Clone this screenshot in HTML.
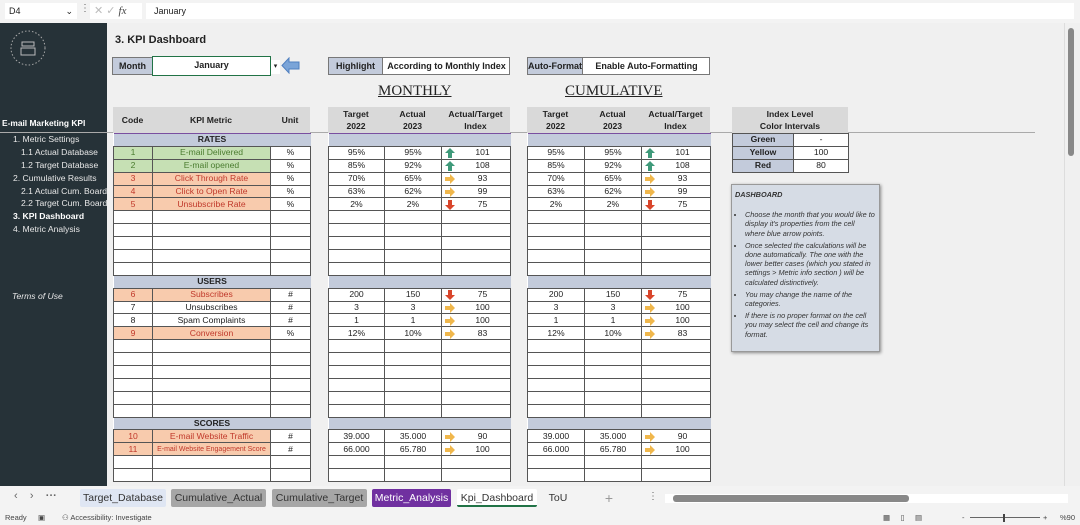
<!DOCTYPE html>
<html><head><meta charset="utf-8"><style>
*{box-sizing:border-box;margin:0;padding:0}
body{width:1080px;height:525px;overflow:hidden;background:#f0f0f0;font-family:"Liberation Sans",sans-serif;font-size:9px;color:#222;position:relative}
.abs{position:absolute}
table{border-collapse:collapse;table-layout:fixed;position:absolute;background:#fff;z-index:2}
td{border:1px solid #555;height:12.9px;text-align:center;font-size:8.6px;padding:0;white-space:nowrap;overflow:hidden;line-height:11px}
tr.sec td{background:#c3cbdb;font-weight:bold;border-left:none;border-right:none;border-top:1.5px solid #7a4fa0}
tr.g td.c{background:#c6e0b4;color:#4a7c2f}
tr.o td.c{background:#f8cbad;color:#c0392b}
.hd{position:absolute;background:#d9d9d9;font-weight:bold;font-size:8.6px;text-align:center;line-height:12px;z-index:2}
.ar{display:inline-block;width:10px;height:10px;vertical-align:middle;float:left;margin:1px 0 0 3px}
.nav div{color:#e8e8e8;font-size:8.6px;height:12.9px;line-height:12.9px;white-space:nowrap}
.tab{position:absolute;top:489px;height:18px;line-height:18px;font-size:10.5px;color:#333;text-align:center;border-radius:2px}
</style></head><body>
<!-- formula bar -->
<div class="abs" style="left:0;top:0;width:1080px;height:23px;background:#f3f3f3"></div>
<div class="abs" style="left:5px;top:3px;width:72px;height:16px;background:#fff;font-size:9px;line-height:16px;padding-left:4px">D4<span style="position:absolute;right:4px">⌄</span></div>
<div class="abs" style="left:80px;top:3px;font-size:10px;color:#666">⋮</div>
<div class="abs" style="left:90px;top:3px;width:52px;height:16px;background:#fff;font-size:11px;color:#bbb;line-height:16px;padding-left:4px">✕ ✓ <i style="color:#444;font-family:'Liberation Serif',serif">fx</i></div>
<div class="abs" style="left:146px;top:3px;width:928px;height:16px;background:#fff;font-size:9px;line-height:16px;padding-left:8px">January</div>
<!-- sidebar -->
<div class="abs" style="left:0;top:23px;width:107px;height:463px;background:#263238"></div>
<svg class="abs" style="left:8px;top:28px" width="40" height="40"><circle cx="20" cy="20" r="17" fill="none" stroke="#aaa" stroke-dasharray="1.5 2"/><rect x="14" y="14" width="12" height="4" fill="none" stroke="#bbb"/><rect x="13" y="20" width="14" height="7" fill="none" stroke="#bbb"/></svg>
<div class="abs" style="left:2px;top:118px;color:#fff;font-weight:bold;font-size:8.4px">E-mail Marketing KPI</div>
<div class="abs" style="left:0;top:132px;width:1035px;height:1px;background:#aaa;z-index:1"></div>
<div class="abs nav" style="left:0;top:133px;width:107px">
<div style="padding-left:13px">1. Metric Settings</div>
<div style="padding-left:21px">1.1 Actual Database</div>
<div style="padding-left:21px">1.2 Target Database</div>
<div style="padding-left:13px">2. Cumulative Results</div>
<div style="padding-left:21px">2.1 Actual Cum. Board</div>
<div style="padding-left:21px">2.2 Target Cum. Board</div>
<div style="padding-left:13px;font-weight:bold;color:#fff">3. KPI Dashboard</div>
<div style="padding-left:13px">4. Metric Analysis</div>
</div>
<div class="abs" style="left:12px;top:291px;color:#e8e8e8;font-style:italic;font-size:8.6px">Terms of Use</div>
<!-- title -->
<div class="abs" style="left:115px;top:34px;font-weight:bold;font-size:11px">3. KPI Dashboard</div>
<div class="abs" style="left:112px;top:57px;width:158px;height:18px;border:1px solid #777;background:#c3cbdb"></div>
<div class="abs" style="left:113px;top:58px;width:39px;height:16px;font-weight:bold;line-height:16px;text-align:center">Month</div>
<div class="abs" style="left:152px;top:56px;width:119px;height:20px;border:1.5px solid #217346;background:#fff;font-weight:bold;line-height:17px;text-align:center">January</div>
<div class="abs" style="left:271px;top:60px;width:9px;height:14px;background:#fff;font-size:7px;text-align:center;line-height:14px">▾</div>
<svg class="abs" style="left:281px;top:57px" width="19" height="17"><path d="M1 8.5 L8 1 V5 H18 V12 H8 V16 Z" fill="#7aa4d8" stroke="#4f7fbf"/></svg>
<div class="abs" style="left:328px;top:57px;width:182px;height:18px;border:1px solid #777;background:#fff"></div>
<div class="abs" style="left:329px;top:58px;width:54px;height:16px;background:#c3cbdb;font-weight:bold;line-height:16px;text-align:center;border-right:1px solid #777">Highlight</div>
<div class="abs" style="left:384px;top:58px;width:125px;line-height:16px;text-align:center;font-weight:bold">According to Monthly Index</div>
<div class="abs" style="left:527px;top:57px;width:183px;height:18px;border:1px solid #777;background:#fff"></div>
<div class="abs" style="left:528px;top:58px;width:55px;height:16px;background:#c3cbdb;font-weight:bold;line-height:16px;text-align:center;border-right:1px solid #777">Auto-Format</div>
<div class="abs" style="left:584px;top:58px;width:125px;line-height:16px;text-align:center;font-weight:bold">Enable Auto-Formatting</div>
<div class="abs" style="left:378px;top:83px;font-family:'Liberation Serif',serif;font-size:15px;text-decoration:underline">MONTHLY</div>
<div class="abs" style="left:565px;top:83px;font-family:'Liberation Serif',serif;font-size:15px;text-decoration:underline">CUMULATIVE</div>
<!-- header bars -->
<div class="hd" style="left:113px;top:107px;width:197px;height:26px;line-height:26px"><span style="position:absolute;left:0;width:39px">Code</span><span style="position:absolute;left:39px;width:118px">KPI Metric</span><span style="position:absolute;left:157px;width:40px">Unit</span></div>
<div class="hd" style="left:328px;top:107px;width:182px;height:26px;padding-top:1px"><span style="position:absolute;left:0;width:56px">Target<br>2022</span><span style="position:absolute;left:56px;width:57px">Actual<br>2023</span><span style="position:absolute;left:113px;width:69px">Actual/Target<br>Index</span></div>
<div class="hd" style="left:527px;top:107px;width:183px;height:26px;padding-top:1px"><span style="position:absolute;left:0;width:57px">Target<br>2022</span><span style="position:absolute;left:57px;width:57px">Actual<br>2023</span><span style="position:absolute;left:114px;width:69px">Actual/Target<br>Index</span></div>
<div class="hd" style="left:732px;top:107px;width:116px;height:26px;padding-top:1px">Index Level<br>Color Intervals</div>

<svg width="0" height="0" style="position:absolute"><defs>
<symbol id="up" viewBox="0 0 10 10"><path d="M5 0 L10 5 H7 V10 H3 V5 H0 Z" fill="#3f9a7a"/></symbol>
<symbol id="rt" viewBox="0 0 10 10"><path d="M10 5 L5 0 V3 H0 V7 H5 V10 Z" fill="#f0b74c"/></symbol>
<symbol id="dn" viewBox="0 0 10 10"><path d="M5 10 L10 5 H7 V0 H3 V5 H0 Z" fill="#d9452b"/></symbol>
</defs></svg>

<!-- left table -->
<table style="left:113px;top:133px;width:197px">
<colgroup><col style="width:39px"><col style="width:118px"><col style="width:40px"></colgroup>
<tr class="sec"><td colspan="3">RATES</td></tr>
<tr class="g"><td class="c">1</td><td class="c">E-mail Delivered</td><td>%</td></tr>
<tr class="g"><td class="c">2</td><td class="c">E-mail opened</td><td>%</td></tr>
<tr class="o"><td class="c">3</td><td class="c">Click Through Rate</td><td>%</td></tr>
<tr class="o"><td class="c">4</td><td class="c">Click to Open Rate</td><td>%</td></tr>
<tr class="o"><td class="c">5</td><td class="c">Unsubscribe Rate</td><td>%</td></tr>
<tr><td></td><td></td><td></td></tr><tr><td></td><td></td><td></td></tr><tr><td></td><td></td><td></td></tr><tr><td></td><td></td><td></td></tr><tr><td></td><td></td><td></td></tr>
<tr class="sec"><td colspan="3">USERS</td></tr>
<tr class="o"><td class="c">6</td><td class="c">Subscribes</td><td>#</td></tr>
<tr><td>7</td><td>Unsubscribes</td><td>#</td></tr>
<tr><td>8</td><td>Spam Complaints</td><td>#</td></tr>
<tr class="o"><td class="c">9</td><td class="c">Conversion</td><td>%</td></tr>
<tr><td></td><td></td><td></td></tr><tr><td></td><td></td><td></td></tr><tr><td></td><td></td><td></td></tr><tr><td></td><td></td><td></td></tr><tr><td></td><td></td><td></td></tr><tr><td></td><td></td><td></td></tr>
<tr class="sec"><td colspan="3">SCORES</td></tr>
<tr class="o"><td class="c">10</td><td class="c">E-mail Website Traffic</td><td>#</td></tr>
<tr class="o"><td class="c">11</td><td class="c" style="font-size:7px">E-mail Website Engagement Score</td><td>#</td></tr>
<tr><td></td><td></td><td></td></tr><tr><td></td><td></td><td></td></tr>
</table>

<!-- monthly & cumulative tables -->
<table style="left:328px;top:133px;width:182px">
<colgroup><col style="width:56px"><col style="width:57px"><col style="width:69px"></colgroup>
<tr class="sec"><td colspan="3">&nbsp;</td></tr>
<tr><td>95%</td><td>95%</td><td><svg class="ar"><use href="#up"/></svg>101</td></tr>
<tr><td>85%</td><td>92%</td><td><svg class="ar"><use href="#up"/></svg>108</td></tr>
<tr><td>70%</td><td>65%</td><td><svg class="ar"><use href="#rt"/></svg>93</td></tr>
<tr><td>63%</td><td>62%</td><td><svg class="ar"><use href="#rt"/></svg>99</td></tr>
<tr><td>2%</td><td>2%</td><td><svg class="ar"><use href="#dn"/></svg>75</td></tr>
<tr><td></td><td></td><td></td></tr><tr><td></td><td></td><td></td></tr><tr><td></td><td></td><td></td></tr><tr><td></td><td></td><td></td></tr><tr><td></td><td></td><td></td></tr>
<tr class="sec"><td colspan="3">&nbsp;</td></tr>
<tr><td>200</td><td>150</td><td><svg class="ar"><use href="#dn"/></svg>75</td></tr>
<tr><td>3</td><td>3</td><td><svg class="ar"><use href="#rt"/></svg>100</td></tr>
<tr><td>1</td><td>1</td><td><svg class="ar"><use href="#rt"/></svg>100</td></tr>
<tr><td>12%</td><td>10%</td><td><svg class="ar"><use href="#rt"/></svg>83</td></tr>
<tr><td></td><td></td><td></td></tr><tr><td></td><td></td><td></td></tr><tr><td></td><td></td><td></td></tr><tr><td></td><td></td><td></td></tr><tr><td></td><td></td><td></td></tr><tr><td></td><td></td><td></td></tr>
<tr class="sec"><td colspan="3">&nbsp;</td></tr>
<tr><td>39.000</td><td>35.000</td><td><svg class="ar"><use href="#rt"/></svg>90</td></tr>
<tr><td>66.000</td><td>65.780</td><td><svg class="ar"><use href="#rt"/></svg>100</td></tr>
<tr><td></td><td></td><td></td></tr><tr><td></td><td></td><td></td></tr>
</table>
<table style="left:527px;top:133px;width:183px">
<colgroup><col style="width:57px"><col style="width:57px"><col style="width:69px"></colgroup>
<tr class="sec"><td colspan="3">&nbsp;</td></tr>
<tr><td>95%</td><td>95%</td><td><svg class="ar"><use href="#up"/></svg>101</td></tr>
<tr><td>85%</td><td>92%</td><td><svg class="ar"><use href="#up"/></svg>108</td></tr>
<tr><td>70%</td><td>65%</td><td><svg class="ar"><use href="#rt"/></svg>93</td></tr>
<tr><td>63%</td><td>62%</td><td><svg class="ar"><use href="#rt"/></svg>99</td></tr>
<tr><td>2%</td><td>2%</td><td><svg class="ar"><use href="#dn"/></svg>75</td></tr>
<tr><td></td><td></td><td></td></tr><tr><td></td><td></td><td></td></tr><tr><td></td><td></td><td></td></tr><tr><td></td><td></td><td></td></tr><tr><td></td><td></td><td></td></tr>
<tr class="sec"><td colspan="3">&nbsp;</td></tr>
<tr><td>200</td><td>150</td><td><svg class="ar"><use href="#dn"/></svg>75</td></tr>
<tr><td>3</td><td>3</td><td><svg class="ar"><use href="#rt"/></svg>100</td></tr>
<tr><td>1</td><td>1</td><td><svg class="ar"><use href="#rt"/></svg>100</td></tr>
<tr><td>12%</td><td>10%</td><td><svg class="ar"><use href="#rt"/></svg>83</td></tr>
<tr><td></td><td></td><td></td></tr><tr><td></td><td></td><td></td></tr><tr><td></td><td></td><td></td></tr><tr><td></td><td></td><td></td></tr><tr><td></td><td></td><td></td></tr><tr><td></td><td></td><td></td></tr>
<tr class="sec"><td colspan="3">&nbsp;</td></tr>
<tr><td>39.000</td><td>35.000</td><td><svg class="ar"><use href="#rt"/></svg>90</td></tr>
<tr><td>66.000</td><td>65.780</td><td><svg class="ar"><use href="#rt"/></svg>100</td></tr>
<tr><td></td><td></td><td></td></tr><tr><td></td><td></td><td></td></tr>
</table>

<!-- index level -->
<table style="left:732px;top:133px;width:116px">
<colgroup><col style="width:61px"><col style="width:55px"></colgroup>
<tr><td style="background:#c3cbdb;font-weight:bold">Green</td><td>-</td></tr>
<tr><td style="background:#c3cbdb;font-weight:bold">Yellow</td><td>100</td></tr>
<tr><td style="background:#c3cbdb;font-weight:bold">Red</td><td>80</td></tr>
</table>

<!-- note box -->
<div class="abs" style="left:731px;top:184px;width:149px;height:168px;background:#d6dce5;border:1px solid #999;box-shadow:1px 1px 3px #888;padding:5px 3px;font-style:italic;font-size:7.3px;line-height:9.2px;color:#333;z-index:2">
<div style="font-weight:bold">DASHBOARD</div>
<ul style="margin-top:11px;padding-left:10px">
<li style="margin-bottom:3px">Choose the month that you would like to display it's properties from the cell where blue arrow points.</li>
<li style="margin-bottom:3px">Once selected the calculations will be done automatically. The one with the lower better cases (which you stated in settings &gt; Metric info section ) will be calculated distinctively.</li>
<li style="margin-bottom:3px">You may change the name of the categories.</li>
<li>If there is no proper format on the cell you may select the cell and change its format.</li>
</ul></div>

<!-- scrollbar -->
<div class="abs" style="left:1064px;top:23px;width:16px;height:463px;background:#f0f0f0;border-left:1px solid #ddd"></div>
<div class="abs" style="left:1068px;top:28px;width:6px;height:128px;background:#888;border-radius:3px"></div>

<!-- tabs -->
<div class="abs" style="left:0;top:486px;width:1080px;height:24px;background:#f3f3f3"></div>
<div class="abs" style="left:14px;top:490px;font-size:11px;color:#666">‹ &nbsp;&nbsp; › &nbsp;&nbsp; <b>···</b></div>
<div class="tab" style="left:80px;width:86px;background:#dfe6f3">Target_Database</div>
<div class="tab" style="left:171px;width:95px;background:#a6a6a6">Cumulative_Actual</div>
<div class="tab" style="left:272px;width:95px;background:#a6a6a6">Cumulative_Target</div>
<div class="tab" style="left:372px;width:79px;background:#7030a0;color:#fff">Metric_Analysis</div>
<div class="tab" style="left:457px;width:80px;background:#fff;border-bottom:2px solid #217346">Kpi_Dashboard</div>
<div class="tab" style="left:544px;width:28px">ToU</div>
<div class="tab" style="left:600px;width:18px;color:#999;font-size:14px">+</div>
<div class="abs" style="left:648px;top:491px;font-size:10px;color:#666">⋮</div>
<div class="abs" style="left:665px;top:494px;width:403px;height:9px;background:#fff"></div>
<div class="abs" style="left:673px;top:495px;width:236px;height:7px;background:#888;border-radius:3px"></div>
<!-- status bar -->
<div class="abs" style="left:0;top:510px;width:1080px;height:15px;background:#f3f3f3;font-size:7.5px;color:#444;line-height:15px">
<span style="position:absolute;left:5px">Ready</span>
<span style="position:absolute;left:38px">▣</span>
<span style="position:absolute;left:62px">⚇ Accessibility: Investigate</span>
<span style="position:absolute;left:883px">▦ &nbsp;&nbsp;&nbsp; ▯ &nbsp;&nbsp;&nbsp; ▤</span>
<span style="position:absolute;left:962px">-</span>
<span style="position:absolute;left:970px;top:7px;width:70px;height:1px;background:#666"></span>
<span style="position:absolute;left:1003px;top:4px;width:2px;height:8px;background:#444"></span>
<span style="position:absolute;left:1043px">+</span>
<span style="position:absolute;left:1060px">%90</span>
</div>
</body></html>
